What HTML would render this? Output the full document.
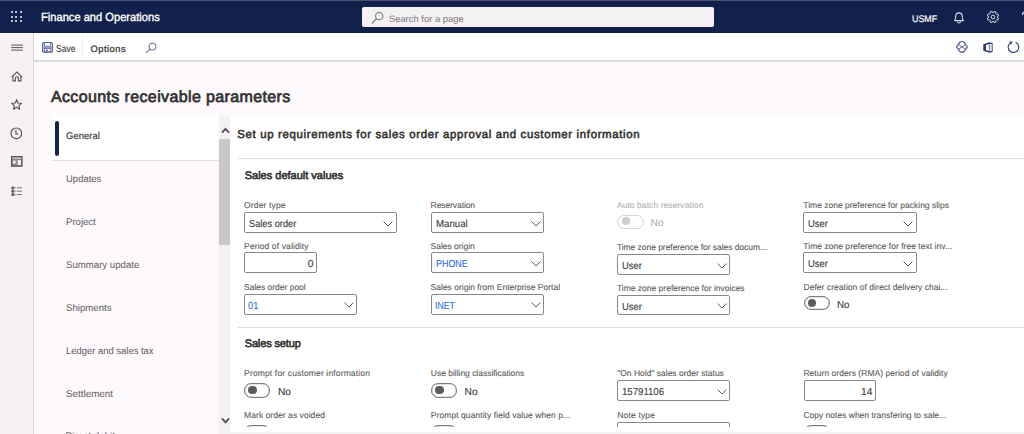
<!DOCTYPE html>
<html><head><meta charset="utf-8">
<style>
*{margin:0;padding:0;box-sizing:border-box}
html,body{width:1024px;height:434px;overflow:hidden;background:#fdf9fd;font-family:"Liberation Sans",sans-serif}
.a{position:absolute}
.t{position:absolute;white-space:pre;font-family:"Liberation Sans",sans-serif;text-rendering:geometricPrecision}
.inp{position:absolute;border:1px solid #8a8886;border-radius:2px;background:#fff}
.chev{position:absolute;width:10px;height:6px}
.tg{position:absolute;width:26.2px;height:14.2px;border:1px solid #7f7d7c;box-shadow:inset 0 0 0 0.35px #9a9897;border-radius:7.1px;background:#fff}
.tg i{position:absolute;left:3.4px;top:1.6px;width:8.4px;height:8.4px;border-radius:50%;background:#5f5b59}
.sep{position:absolute;height:1px;background:#e1dfdd}
svg{position:absolute;overflow:visible}
</style></head><body>
<div class="a" style="left:0;top:0;width:1024px;height:32.5px;background:#12214c"></div>
<div class="a" style="left:0;top:0;width:1024px;height:1px;background:#4a5272"></div>
<div class="a" style="left:11px;top:11.3px;width:2.1px;height:2.1px;background:#f4f4f8;border-radius:50%"></div>
<div class="a" style="left:15.35px;top:11.3px;width:2.1px;height:2.1px;background:#f4f4f8;border-radius:50%"></div>
<div class="a" style="left:19.7px;top:11.3px;width:2.1px;height:2.1px;background:#f4f4f8;border-radius:50%"></div>
<div class="a" style="left:11px;top:15.5px;width:2.1px;height:2.1px;background:#f4f4f8;border-radius:50%"></div>
<div class="a" style="left:15.35px;top:15.5px;width:2.1px;height:2.1px;background:#f4f4f8;border-radius:50%"></div>
<div class="a" style="left:19.7px;top:15.5px;width:2.1px;height:2.1px;background:#f4f4f8;border-radius:50%"></div>
<div class="a" style="left:11px;top:19.7px;width:2.1px;height:2.1px;background:#f4f4f8;border-radius:50%"></div>
<div class="a" style="left:15.35px;top:19.7px;width:2.1px;height:2.1px;background:#f4f4f8;border-radius:50%"></div>
<div class="a" style="left:19.7px;top:19.7px;width:2.1px;height:2.1px;background:#f4f4f8;border-radius:50%"></div>
<div class="a" style="left:362px;top:6.5px;width:352px;height:20px;background:#f4f1f4;border-radius:2px"></div>
<svg style="left:371px;top:11px" width="14" height="14" viewBox="0 0 14 14"><circle cx="8.2" cy="5" r="3.7" fill="none" stroke="#8a8589" stroke-width="1.2"/><line x1="5.5" y1="7.7" x2="1.3" y2="12" stroke="#8a8589" stroke-width="1.3" stroke-linecap="round"/></svg>
<svg style="left:953px;top:11px" width="12" height="13" viewBox="0 0 12 13"><path d="M1.6 9.6 C2.6 8.8 2.7 7.8 2.7 5.2 A3.3 3.3 0 0 1 9.3 5.2 C9.3 7.8 9.4 8.8 10.4 9.6 Z" fill="none" stroke="#d9dbe6" stroke-width="1.1" stroke-linejoin="round"/><path d="M4.5 10.5 A1.5 1.5 0 0 0 7.5 10.5" fill="none" stroke="#d9dbe6" stroke-width="1.1"/></svg>
<svg style="left:986.5px;top:11px" width="12" height="12" viewBox="0 0 12 12"><path d="M11.64 7.10 L10.77 9.21 L9.65 8.63 L8.63 9.65 L9.21 10.77 L7.10 11.64 L6.72 10.44 L5.28 10.44 L4.90 11.64 L2.79 10.77 L3.37 9.65 L2.35 8.63 L1.23 9.21 L0.36 7.10 L1.56 6.72 L1.56 5.28 L0.36 4.90 L1.23 2.79 L2.35 3.37 L3.37 2.35 L2.79 1.23 L4.90 0.36 L5.28 1.56 L6.72 1.56 L7.10 0.36 L9.21 1.23 L8.63 2.35 L9.65 3.37 L10.77 2.79 L11.64 4.90 L10.44 5.28 L10.44 6.72 Z" fill="none" stroke="#d9dbe6" stroke-width="1" stroke-linejoin="round"/><circle cx="6" cy="6" r="1.9" fill="none" stroke="#d9dbe6" stroke-width="1"/></svg>
<svg style="left:1019px;top:10px" width="8" height="8" viewBox="0 0 8 8"><path d="M3.5 5 A2.8 2.8 0 0 1 8.5 3" fill="none" stroke="#d9dbe6" stroke-width="1.3"/></svg>
<div class="a" style="left:0;top:32.5px;width:33px;height:402px;background:#f5f1f5"></div>
<div class="a" style="left:32.8px;top:32.5px;width:1.2px;height:402px;background:#d9d6d9"></div>
<svg style="left:10.5px;top:44px" width="12" height="8" viewBox="0 0 12 8"><path d="M0.2 1.1H11.8M0.2 3.6H11.8M0.2 6.1H11.8" stroke="#555352" stroke-width="1"/></svg>
<svg style="left:10.6px;top:70.5px" width="12" height="11" viewBox="0 0 12 11"><path d="M0.9 5.9 L5.9 1 L10.9 5.9" fill="none" stroke="#555352" stroke-width="1.1" stroke-linejoin="round" stroke-linecap="round"/><path d="M1.9 4.9 V9.9 H4.4 V7.2 Q4.4 5.8 5.9 5.8 Q7.4 5.8 7.4 7.2 V9.9 H9.9 V4.9" fill="none" stroke="#555352" stroke-width="1.1" stroke-linejoin="round"/></svg>
<svg style="left:10.6px;top:98.6px" width="12" height="12" viewBox="0 0 12 12"><path d="M5.60 0.60 L6.95 4.04 L10.64 4.26 L7.79 6.61 L8.72 10.19 L5.60 8.20 L2.48 10.19 L3.41 6.61 L0.56 4.26 L4.25 4.04 Z" fill="none" stroke="#555352" stroke-width="1.1" stroke-linejoin="round"/></svg>
<svg style="left:10.3px;top:127.1px" width="13" height="13" viewBox="0 0 13 13"><circle cx="6.3" cy="6.3" r="5.35" fill="none" stroke="#555352" stroke-width="1.15"/><path d="M5.9 3.1 V6.9 H8.3" fill="none" stroke="#555352" stroke-width="1.15"/></svg>
<svg style="left:10.6px;top:156.4px" width="12" height="11" viewBox="0 0 12 11"><rect x="0.6" y="0.6" width="10.4" height="9.6" fill="#8a8887" stroke="#555352" stroke-width="1.2"/><path d="M1.2 2.1 H10.4" stroke="#e9e6e9" stroke-width="0.9"/><rect x="1.9" y="4.6" width="2.7" height="2.9" fill="#f5f1f5"/><rect x="6.6" y="4.1" width="3.3" height="4.9" fill="#f5f1f5"/></svg>
<svg style="left:10.5px;top:186px" width="12" height="11" viewBox="0 0 12 11"><rect x="0.5" y="0.7" width="2.8" height="2.6" fill="#555352"/><rect x="0.5" y="4" width="2.8" height="2.6" fill="#555352"/><rect x="0.5" y="7.3" width="2.8" height="2.6" fill="#555352"/><path d="M4.2 1.8H5.2M6 1.8H10.9M4.2 5.2H5.2M6 5.2H10.9M4.2 8.6H5.2M6 8.6H10.9" stroke="#6f6d6c" stroke-width="1"/></svg>
<div class="a" style="left:34px;top:32.5px;width:990px;height:28px;background:#fff"></div>
<div class="a" style="left:34px;top:60.2px;width:990px;height:1.4px;background:#dcd9dc"></div>
<svg style="left:42px;top:42px" width="11" height="11" viewBox="0 0 11 11"><rect x="0.6" y="0.6" width="9.8" height="9.6" rx="1.3" fill="none" stroke="#5b6594" stroke-width="1.2"/><rect x="2.4" y="0.6" width="6.2" height="3.6" fill="#fff" stroke="#5b6594" stroke-width="0.9"/><rect x="1" y="4.6" width="9" height="1.4" fill="#9aa0bf"/><rect x="2.2" y="6.4" width="6.6" height="3.6" fill="none" stroke="#5b6594" stroke-width="0.9"/><rect x="4" y="7.6" width="1.8" height="1.6" fill="#5b6594"/></svg>
<div class="a" style="left:82px;top:37px;width:1px;height:20px;background:#edebe9"></div>
<svg style="left:144.5px;top:41.5px" width="12" height="12" viewBox="0 0 12 12"><circle cx="7.5" cy="4.6" r="3.4" fill="none" stroke="#6e75a0" stroke-width="1.1"/><line x1="5" y1="7.1" x2="1.3" y2="10.6" stroke="#6e75a0" stroke-width="1.2" stroke-linecap="round"/></svg>
<svg style="left:956.2px;top:41.2px" width="12" height="12" viewBox="0 0 12 12"><path d="M4.3 0.7 H7.5 L11.4 5.9 L7.5 11.1 H4.3 L0.6 5.9 Z" fill="none" stroke="#4f5a8a" stroke-width="1.15" stroke-linejoin="round"/><path d="M2.25 3.35 L9.65 8.45 M9.65 3.35 L2.25 8.45" stroke="#4f5a8a" stroke-width="0.9"/></svg>
<svg style="left:983px;top:41.5px" width="10" height="11" viewBox="0 0 10 11"><path d="M0.3 2.3 L6.3 0.2 L9.6 1.1 V9.9 L6.3 10.8 L0.3 8.7 Z" fill="#2b3a6d"/><path d="M3 2.9 L5.9 2.1 V8.9 L3 8.1 Z" fill="#fff"/><rect x="6.5" y="1.9" width="2.3" height="7.2" fill="#e4e5ee"/></svg>
<svg style="left:1006.5px;top:41px" width="13" height="13" viewBox="0 0 13 13"><path d="M8.6 1.3 A5.3 5.3 0 1 1 3.3 1.9" fill="none" stroke="#2b3a6d" stroke-width="1.1"/><path d="M2.2 0.6 L5.6 0.8 L4 3.8 Z" fill="#2b3a6d"/></svg>
<div class="a" style="left:51.5px;top:116.3px;width:168px;height:44px;background:#fff"></div>
<div class="a" style="left:51.5px;top:160px;width:168px;height:1px;background:#e1dfdd"></div>
<div class="a" style="left:55.2px;top:120.7px;width:3.6px;height:35px;background:#13214b;border-radius:2px"></div>
<div class="a" style="left:219.3px;top:116.3px;width:10.9px;height:318px;background:#f4f1f4"></div>
<div class="a" style="left:219.3px;top:139.3px;width:10.3px;height:106px;background:#c9c7c7"></div>
<svg style="left:220.5px;top:126.5px" width="9" height="7" viewBox="0 0 9 7"><path d="M1 5.6 L4.5 1.9 L8 5.6" fill="none" stroke="#555352" stroke-width="1.9"/></svg>
<svg style="left:220.5px;top:416.5px" width="9" height="7" viewBox="0 0 9 7"><path d="M1 1.4 L4.5 5.3 L8 1.4" fill="none" stroke="#555352" stroke-width="1.9"/></svg>
<div class="a" style="left:230.2px;top:116.3px;width:794px;height:316px;background:#fff"></div>
<div class="sep" style="left:237.5px;top:158px;width:787px;height:1.2px"></div>
<div class="sep" style="left:237.5px;top:327px;width:787px;height:1.2px"></div>
<div class="inp" style="left:244px;top:211.89999999999998px;width:152.5px;height:20.700000000000017px"></div>
<svg style="left:383.2px;top:220.6px" width="10" height="6" viewBox="0 0 10 6"><path d="M0.6 0.6 L5 5 L9.4 0.6" fill="none" stroke="#605e5c" stroke-width="1"/></svg>
<div class="inp" style="left:244px;top:252.39999999999998px;width:72.8px;height:20.30000000000001px"></div>
<div class="inp" style="left:244px;top:293.5px;width:112.99999999999999px;height:21.0px"></div>
<svg style="left:343.7px;top:302.2px" width="10" height="6" viewBox="0 0 10 6"><path d="M0.6 0.6 L5 5 L9.4 0.6" fill="none" stroke="#605e5c" stroke-width="1"/></svg>
<div class="inp" style="left:430.5px;top:211.89999999999998px;width:113.3px;height:20.700000000000017px"></div>
<svg style="left:530.5px;top:220.6px" width="10" height="6" viewBox="0 0 10 6"><path d="M0.6 0.6 L5 5 L9.4 0.6" fill="none" stroke="#605e5c" stroke-width="1"/></svg>
<div class="inp" style="left:430.5px;top:252.39999999999998px;width:113.3px;height:20.30000000000001px"></div>
<svg style="left:530.5px;top:261.09999999999997px" width="10" height="6" viewBox="0 0 10 6"><path d="M0.6 0.6 L5 5 L9.4 0.6" fill="none" stroke="#605e5c" stroke-width="1"/></svg>
<div class="inp" style="left:430.5px;top:293.5px;width:113.3px;height:21.0px"></div>
<svg style="left:530.5px;top:302.2px" width="10" height="6" viewBox="0 0 10 6"><path d="M0.6 0.6 L5 5 L9.4 0.6" fill="none" stroke="#605e5c" stroke-width="1"/></svg>
<div class="inp" style="left:617.4px;top:254.2px;width:112.50000000000004px;height:20.399999999999977px"></div>
<svg style="left:716.6px;top:262.9px" width="10" height="6" viewBox="0 0 10 6"><path d="M0.6 0.6 L5 5 L9.4 0.6" fill="none" stroke="#605e5c" stroke-width="1"/></svg>
<div class="inp" style="left:617.4px;top:294.7px;width:112.69999999999997px;height:20.80000000000001px"></div>
<svg style="left:716.8px;top:303.4px" width="10" height="6" viewBox="0 0 10 6"><path d="M0.6 0.6 L5 5 L9.4 0.6" fill="none" stroke="#605e5c" stroke-width="1"/></svg>
<div class="inp" style="left:803.3px;top:211.89999999999998px;width:113.3px;height:20.700000000000017px"></div>
<svg style="left:903.3px;top:220.6px" width="10" height="6" viewBox="0 0 10 6"><path d="M0.6 0.6 L5 5 L9.4 0.6" fill="none" stroke="#605e5c" stroke-width="1"/></svg>
<div class="inp" style="left:803.3px;top:252.39999999999998px;width:113.3px;height:20.30000000000001px"></div>
<svg style="left:903.3px;top:261.09999999999997px" width="10" height="6" viewBox="0 0 10 6"><path d="M0.6 0.6 L5 5 L9.4 0.6" fill="none" stroke="#605e5c" stroke-width="1"/></svg>
<div class="inp" style="left:617.4px;top:380.2px;width:112.69999999999997px;height:20.600000000000023px"></div>
<svg style="left:716.8px;top:388.9px" width="10" height="6" viewBox="0 0 10 6"><path d="M0.6 0.6 L5 5 L9.4 0.6" fill="none" stroke="#605e5c" stroke-width="1"/></svg>
<div class="inp" style="left:803.5px;top:380.2px;width:72.3px;height:20.600000000000023px"></div>
<div class="a" style="left:230.2px;top:426.7px;width:794px;height:6px;background:#fff;z-index:2"></div>
<div class="inp" style="left:617.4px;top:422.0px;width:112.69999999999997px;height:20.19999999999999px"></div>
<svg style="left:716.8px;top:430.7px" width="10" height="6" viewBox="0 0 10 6"><path d="M0.6 0.6 L5 5 L9.4 0.6" fill="none" stroke="#605e5c" stroke-width="1"/></svg>
<div class="tg" style="left:617.4px;top:214.5px;border-color:#d6d3d5;box-shadow:none"><i style="background:#d0cdcf"></i></div>
<div class="tg" style="left:803.5px;top:296.2px"><i></i></div>
<div class="tg" style="left:244.1px;top:383.4px"><i></i></div>
<div class="tg" style="left:430.8px;top:383.4px"><i></i></div>
<div class="tg" style="left:244.1px;top:425.2px"><i></i></div>
<div class="tg" style="left:430.8px;top:425.2px"><i></i></div>
<div class="tg" style="left:803.5px;top:425.2px"><i></i></div>
<div class="a" style="left:230.2px;top:432.2px;width:794px;height:2px;background:#f4f1f4;z-index:3"></div>
<div class="t" style="left:41.20px;top:10.00px;font-size:11.8px;line-height:14.16px;color:#ffffff;-webkit-text-stroke:0.35px #ffffff;transform:scaleX(0.9431);transform-origin:0 0;">Finance and Operations</div>
<div class="t" style="left:388.90px;top:12.62px;font-size:9.4px;line-height:11.28px;color:#7d787c;letter-spacing:0.017px;">Search for a page</div>
<div class="t" style="left:912.10px;top:13.70px;font-size:9.6px;line-height:11.52px;color:#ffffff;-webkit-text-stroke:0.2px #ffffff;transform:scaleX(0.9285);transform-origin:0 0;">USMF</div>
<div class="t" style="left:55.50px;top:43.90px;font-size:10.2px;line-height:12.24px;color:#3b3a39;-webkit-text-stroke:0.1px #3b3a39;transform:scaleX(0.84);transform-origin:0 0;">Save</div>
<div class="t" style="left:90.50px;top:43.31px;font-size:9.4px;line-height:11.28px;color:#3b3a39;-webkit-text-stroke:0.3px #3b3a39;letter-spacing:0.465px;">Options</div>
<div class="t" style="left:50.90px;top:88.10px;font-size:16px;line-height:19.2px;color:#323130;-webkit-text-stroke:0.7px #323130;letter-spacing:0.374px;">Accounts receivable parameters</div>
<div class="t" style="left:65.50px;top:131.11px;font-size:9.8px;line-height:11.76px;color:#3b3a39;-webkit-text-stroke:0.15px #3b3a39;transform:scaleX(0.9689);transform-origin:0 0;">General</div>
<div class="t" style="left:65.50px;top:174.31px;font-size:9.8px;line-height:11.76px;color:#666463;-webkit-text-stroke:0.05px #666463;transform:scaleX(0.9692);transform-origin:0 0;">Updates</div>
<div class="t" style="left:65.50px;top:217.16px;font-size:9.8px;line-height:11.76px;color:#666463;-webkit-text-stroke:0.05px #666463;transform:scaleX(0.9764);transform-origin:0 0;">Project</div>
<div class="t" style="left:65.50px;top:260.01px;font-size:9.8px;line-height:11.76px;color:#666463;-webkit-text-stroke:0.05px #666463;transform:scaleX(0.9823);transform-origin:0 0;">Summary update</div>
<div class="t" style="left:65.50px;top:302.86px;font-size:9.8px;line-height:11.76px;color:#666463;-webkit-text-stroke:0.05px #666463;transform:scaleX(0.9847);transform-origin:0 0;">Shipments</div>
<div class="t" style="left:65.50px;top:345.72px;font-size:9.8px;line-height:11.76px;color:#666463;-webkit-text-stroke:0.05px #666463;transform:scaleX(0.9626);transform-origin:0 0;">Ledger and sales tax</div>
<div class="t" style="left:65.50px;top:388.56px;font-size:9.8px;line-height:11.76px;color:#666463;-webkit-text-stroke:0.05px #666463;transform:scaleX(1.0034);transform-origin:0 0;">Settlement</div>
<div class="t" style="left:65.50px;top:431.41px;font-size:9.8px;line-height:11.76px;color:#666463;-webkit-text-stroke:0.05px #666463;">Direct debit</div>
<div class="t" style="left:237.30px;top:129.20px;font-size:11.4px;line-height:13.68px;color:#323130;-webkit-text-stroke:0.55px #323130;letter-spacing:0.665px;">Set up requirements for sales order approval and customer information</div>
<div class="t" style="left:244.70px;top:170.10px;font-size:11px;line-height:13.2px;color:#323130;-webkit-text-stroke:0.6px #323130;">Sales default values</div>
<div class="t" style="left:244.70px;top:338.40px;font-size:11px;line-height:13.2px;color:#323130;-webkit-text-stroke:0.6px #323130;letter-spacing:-0.138px;">Sales setup</div>
<div class="t" style="left:244.10px;top:199.91px;font-size:8.5px;line-height:10.2px;color:#605e5c;-webkit-text-stroke:0.12px #605e5c;letter-spacing:0.138px;">Order type</div>
<div class="t" style="left:244.10px;top:240.52px;font-size:8.5px;line-height:10.2px;color:#605e5c;-webkit-text-stroke:0.12px #605e5c;letter-spacing:0.119px;">Period of validity</div>
<div class="t" style="left:244.10px;top:281.80px;font-size:8.5px;line-height:10.2px;color:#605e5c;-webkit-text-stroke:0.12px #605e5c;letter-spacing:-0.020px;">Sales order pool</div>
<div class="t" style="left:430.60px;top:199.91px;font-size:8.5px;line-height:10.2px;color:#605e5c;-webkit-text-stroke:0.12px #605e5c;letter-spacing:-0.086px;">Reservation</div>
<div class="t" style="left:430.60px;top:240.52px;font-size:8.5px;line-height:10.2px;color:#605e5c;-webkit-text-stroke:0.12px #605e5c;letter-spacing:-0.020px;">Sales origin</div>
<div class="t" style="left:430.60px;top:281.80px;font-size:8.5px;line-height:10.2px;color:#605e5c;-webkit-text-stroke:0.12px #605e5c;">Sales origin from Enterprise Portal</div>
<div class="t" style="left:616.90px;top:199.91px;font-size:8.5px;line-height:10.2px;color:#b5b2b5;-webkit-text-stroke:0.12px #b5b2b5;letter-spacing:0.068px;">Auto batch reservation</div>
<div class="t" style="left:616.90px;top:242.02px;font-size:8.5px;line-height:10.2px;color:#605e5c;-webkit-text-stroke:0.12px #605e5c;letter-spacing:-0.045px;">Time zone preference for sales docum...</div>
<div class="t" style="left:616.90px;top:282.52px;font-size:8.5px;line-height:10.2px;color:#605e5c;-webkit-text-stroke:0.12px #605e5c;">Time zone preference for invoices</div>
<div class="t" style="left:803.30px;top:199.91px;font-size:8.5px;line-height:10.2px;color:#605e5c;-webkit-text-stroke:0.12px #605e5c;">Time zone preference for packing slips</div>
<div class="t" style="left:803.30px;top:240.52px;font-size:8.5px;line-height:10.2px;color:#605e5c;-webkit-text-stroke:0.12px #605e5c;letter-spacing:0.035px;">Time zone preference for free text inv...</div>
<div class="t" style="left:803.50px;top:281.71px;font-size:8.5px;line-height:10.2px;color:#605e5c;-webkit-text-stroke:0.12px #605e5c;letter-spacing:0.035px;">Defer creation of direct delivery chai...</div>
<div class="t" style="left:244.10px;top:368.11px;font-size:8.5px;line-height:10.2px;color:#605e5c;-webkit-text-stroke:0.12px #605e5c;letter-spacing:0.146px;">Prompt for customer information</div>
<div class="t" style="left:244.10px;top:410.30px;font-size:8.5px;line-height:10.2px;color:#605e5c;-webkit-text-stroke:0.12px #605e5c;letter-spacing:0.050px;">Mark order as voided</div>
<div class="t" style="left:430.80px;top:368.11px;font-size:8.5px;line-height:10.2px;color:#605e5c;-webkit-text-stroke:0.12px #605e5c;letter-spacing:-0.020px;">Use billing classifications</div>
<div class="t" style="left:430.80px;top:410.30px;font-size:8.5px;line-height:10.2px;color:#605e5c;-webkit-text-stroke:0.12px #605e5c;letter-spacing:0.069px;">Prompt quantity field value when p...</div>
<div class="t" style="left:617.20px;top:368.11px;font-size:8.5px;line-height:10.2px;color:#605e5c;-webkit-text-stroke:0.12px #605e5c;">&quot;On Hold&quot; sales order status</div>
<div class="t" style="left:617.20px;top:410.30px;font-size:8.5px;line-height:10.2px;color:#605e5c;-webkit-text-stroke:0.12px #605e5c;letter-spacing:0.176px;">Note type</div>
<div class="t" style="left:803.40px;top:368.11px;font-size:8.5px;line-height:10.2px;color:#605e5c;-webkit-text-stroke:0.12px #605e5c;letter-spacing:0.044px;">Return orders (RMA) period of validity</div>
<div class="t" style="left:803.40px;top:410.30px;font-size:8.5px;line-height:10.2px;color:#605e5c;-webkit-text-stroke:0.12px #605e5c;">Copy notes when transfering to sale...</div>
<div class="t" style="left:248.80px;top:218.50px;font-size:10.2px;line-height:12.24px;color:#3a3938;-webkit-text-stroke:0.1px #3a3938;transform:scaleX(0.9082);transform-origin:0 0;">Sales order</div>
<div class="t" style="left:435.60px;top:218.50px;font-size:10.2px;line-height:12.24px;color:#3a3938;-webkit-text-stroke:0.1px #3a3938;transform:scaleX(0.9503);transform-origin:0 0;">Manual</div>
<div class="t" style="left:807.60px;top:218.50px;font-size:10.2px;line-height:12.24px;color:#3a3938;-webkit-text-stroke:0.1px #3a3938;transform:scaleX(0.9268);transform-origin:0 0;">User</div>
<div class="t" style="left:435.60px;top:259.11px;font-size:10.2px;line-height:12.24px;color:#2a6ee0;-webkit-text-stroke:0.1px #2a6ee0;transform:scaleX(0.8749);transform-origin:0 0;">PHONE</div>
<div class="t" style="left:621.60px;top:261.11px;font-size:10.2px;line-height:12.24px;color:#3a3938;-webkit-text-stroke:0.1px #3a3938;transform:scaleX(0.9268);transform-origin:0 0;">User</div>
<div class="t" style="left:807.60px;top:259.11px;font-size:10.2px;line-height:12.24px;color:#3a3938;-webkit-text-stroke:0.1px #3a3938;transform:scaleX(0.9268);transform-origin:0 0;">User</div>
<div class="t" style="left:248.40px;top:300.70px;font-size:10.2px;line-height:12.24px;color:#2a6ee0;-webkit-text-stroke:0.1px #2a6ee0;transform:scaleX(0.9105);transform-origin:0 0;">01</div>
<div class="t" style="left:435.30px;top:300.70px;font-size:10.2px;line-height:12.24px;color:#2a6ee0;-webkit-text-stroke:0.1px #2a6ee0;transform:scaleX(0.8475);transform-origin:0 0;">INET</div>
<div class="t" style="left:621.60px;top:301.81px;font-size:10.2px;line-height:12.24px;color:#3a3938;-webkit-text-stroke:0.1px #3a3938;transform:scaleX(0.9268);transform-origin:0 0;">User</div>
<div class="t" style="left:650.60px;top:218.00px;font-size:10.2px;line-height:12.24px;color:#b5b2b5;-webkit-text-stroke:0.1px #b5b2b5;">No</div>
<div class="t" style="left:837.30px;top:300.40px;font-size:10.2px;line-height:12.24px;color:#3a3938;-webkit-text-stroke:0.1px #3a3938;transform:scaleX(0.9566);transform-origin:0 0;">No</div>
<div class="t" style="left:278.00px;top:386.90px;font-size:10.2px;line-height:12.24px;color:#3a3938;-webkit-text-stroke:0.1px #3a3938;">No</div>
<div class="t" style="left:464.60px;top:386.90px;font-size:10.2px;line-height:12.24px;color:#3a3938;-webkit-text-stroke:0.1px #3a3938;">No</div>
<div class="t" style="left:621.70px;top:387.00px;font-size:10.2px;line-height:12.24px;color:#3a3938;-webkit-text-stroke:0.1px #3a3938;transform:scaleX(0.9434);transform-origin:0 0;">15791106</div>
<div class="t" style="left:307.70px;top:258.81px;font-size:10.2px;line-height:12.24px;color:#3a3938;-webkit-text-stroke:0.1px #3a3938;">0</div>
<div class="t" style="left:861.10px;top:387.00px;font-size:10.2px;line-height:12.24px;color:#3a3938;-webkit-text-stroke:0.1px #3a3938;">14</div>
</body></html>
